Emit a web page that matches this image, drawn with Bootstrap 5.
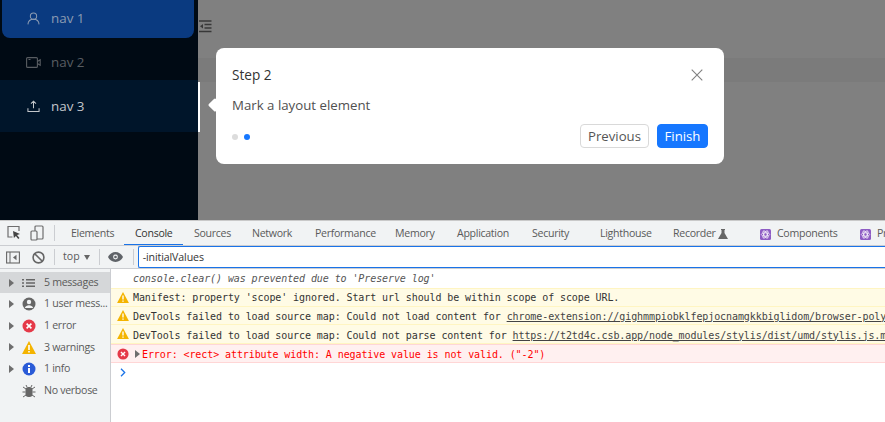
<!DOCTYPE html>
<html lang="en">
<head>
<meta charset="utf-8">
<title>Tour</title>
<link rel="stylesheet" href="https://cdn.jsdelivr.net/npm/bootstrap@5.3.0/dist/css/bootstrap.min.css">
<style>
html,body{margin:0;height:422px;overflow:hidden;background:#fff}
body{font-family:"Open Sans","Noto Sans",sans-serif;font-size:12px;color:#333}
.stage{height:220px;position:relative;background:#808080}
.stage-band{height:24px;background:#7b7b7b}
.stage-main{flex:1 1 auto}
.stage-ico{display:block}
.stage-head{height:58px;padding:20px 0 0 1px}
.side{width:198px;flex:0 0 198px;background:#000a14;height:220px}
.navrow{display:flex;align-items:center;padding-left:27px;gap:11px;font-size:13.4px;color:#6e747a}
.navrow svg{flex:none}
.nav-a{height:38px;margin:0 4px 0 2px;padding-left:25px;padding-bottom:2px;background:#0a3a80;border-radius:0 0 8px 8px;color:#8b9bb2}
.nav-b{height:42px;padding-left:26px;padding-top:6px;gap:10px;color:#585d62}
.nav-c{height:52px;background:#00152a;border-right:2px solid #fff;color:#c3c6ca;margin-right:-2px}
.tourbox{position:absolute;left:216px;top:48px;width:508px;height:116px;background:#fff;border-radius:8px;padding:16px;color:#444}
.tourbox::before{content:"";position:absolute;left:-8px;top:50px;width:14px;height:14px;background:#fff;transform:rotate(45deg) scale(.72);border-radius:2px}
.tour-title{font-size:13.6px;font-weight:500;color:#333;line-height:22px}
.tour-text{font-size:13.25px;line-height:22px;margin-top:8px;color:#505050}
.tour-close{position:absolute;left:475px;top:21px;line-height:0}
.dotset{gap:6px;margin-top:2px}
.dot{width:6px;height:6px;border-radius:50%;background:#dcdcdc}
.dot-on{background:#1677ff}
.tour-foot{margin-top:8px;height:24px}
.tbtn{--bs-btn-font-size:13.2px;font-size:13.2px;line-height:22px;padding:0;border-radius:4px}
.tbtn-a{width:69px;border:1px solid #d9d9d9;background:#fff;color:#555}
.tbtn-b{width:51px;border:1px solid #1677ff;background:#1677ff;color:#fff}
.tabbar{display:grid;grid-template-columns:71px 64px 59px 58px 63px 80px 62px 75px 68px 73px 87px 100px 25px;height:26px;border-top:1px solid #c9c9c9;border-bottom:1px solid #cbcdd1;background:#f1f3f4;font-size:10.6px;letter-spacing:-.3px;color:#5a5a5a;white-space:nowrap;overflow:hidden;align-items:center;position:relative}
.tabbar>span{display:flex;align-items:center;height:100%;padding-top:2px}
.tabbar svg{flex:none}
.tabgl{margin-right:6px}
.tab-on{color:#333;position:relative}
.tab-on::after{content:"";position:absolute;left:-11px;width:59px;bottom:-1px;height:2px;background:#1a73e8}
.tabbar>.tools-ico{position:absolute;top:4px;line-height:0;height:auto;padding-top:0}
.ti-a{left:7px}.ti-b{left:30px}.tabbar>.ti-c{left:54px;height:16px}
.toolbar{height:23px;display:flex;align-items:center;background:#f1f3f4;border-bottom:1px solid #cbcdd1;position:relative;font-size:10.6px;color:#5a5a5a}
.toolbar svg{display:block}
.tbsep{width:1px;height:16px;background:#cbcdd1;flex:none}
.tb-panel{margin-left:6px}.tb-block{margin-left:12px}.tb-s1{margin-left:9px}.tb-top{margin-left:8px}
.tb-caret{margin-left:4px;width:0;height:0;border-top:5px solid #666;border-left:3.5px solid transparent;border-right:3.5px solid transparent}
.tb-s2{margin-left:9px}.tb-eye{margin-left:8px}.tb-s3{margin-left:10px}
.filterbox{flex:1 1 auto;height:22px;margin-left:4px;background:#fff;border:solid #1a73e8;border-width:1px 0 1px 1px;border-radius:2px 0 0 2px;padding-left:4px;line-height:20px;color:#333;font-size:10.6px;letter-spacing:-.1px}
.dtbody{display:flex;height:153px}
.dtside{width:111px;flex:none;background:#f1f3f4;border-right:1px solid #cbcdd1;padding-top:3px;font-size:10.6px;letter-spacing:-.3px;color:#5a5a5a;white-space:nowrap;overflow:hidden}
.dtrow{display:flex;align-items:center;height:21.6px;padding-top:1px}
.dtrow-on{background:#d5d7d9;height:21px}
.dtarrow{width:0;height:0;border-left:5px solid #6e6e6e;border-top:4px solid transparent;border-bottom:4px solid transparent;margin:0 8px 0 9px;flex:none}
.dtarrow-none{width:22px;flex:none}
.dtico{width:14px;flex:none;margin-right:8px;line-height:0;display:block}
.logarea{flex:1 1 auto;min-width:0;font-family:"DejaVu Sans Mono","Liberation Mono",monospace;font-size:10px;letter-spacing:-.09px;white-space:nowrap;overflow:hidden;padding-top:1px;color:#333}
.logrow{display:flex;align-items:center;padding-left:22px;position:relative}
.logrow svg{position:absolute;left:6px;top:3px}
.logq{font-style:italic;color:#555;height:18px;padding-bottom:2px}
.logw{background:#fffbe5;border-bottom:1px solid #fff5c2;height:19px}
.logw+.logw{height:18px;padding-top:1px}
.logw+.logw+.logw{height:19px;padding-top:2px}
.logq+.logw{border-top:1px solid #fff5c2}
.loge{background:#fff0f0;border-top:1px solid #ffd6d6;border-bottom:1px solid #ffd6d6;color:#f00;height:19px;padding-top:1px}
.logw a{color:#444;text-decoration:underline}
.tri{width:0;height:0;border-left:5px solid #6e6e6e;border-top:4px solid transparent;border-bottom:4px solid transparent;margin-right:2px;margin-left:2px}
.prompt{padding-left:9px;padding-top:5px;line-height:0}
</style>
</head>
<body>
<div class="stage d-flex">
  <aside class="side">
    <div class="navrow nav-a"><svg width="13" height="13" viewBox="0 0 14 14" fill="none" stroke="#8b9bb2" stroke-width="1.1"><circle cx="7" cy="4.5" r="3.4"/><path d="M1 13.300c.3-3.300 2.800-5.400 6-5.400s5.700 2.100 6 5.400"/></svg><span>nav 1</span></div>
    <div class="navrow nav-b"><svg width="15" height="11" viewBox="0 0 15 11" fill="none" stroke="#585d62" stroke-width="1.100"><rect x=".6" y=".6" width="10.800" height="9.800" rx="1"/><path d="M2.500 2.500h2M11.400 4.500l2.800-1.700v5.400L11.400 6.500"/></svg><span>nav 2</span></div>
    <div class="navrow nav-c"><svg width="13" height="13" viewBox="0 0 14 14" fill="none" stroke="#c3c6ca" stroke-width="1.100"><path d="M7 9V1.500M4.300 4 7 1.300 9.700 4M1 9v3.500h12V9"/></svg><span>nav 3</span></div>
  </aside>
  <div class="stage-main">
    <div class="stage-head"><svg class="stage-ico" width="13" height="13" viewBox="0 0 13 13" fill="none" stroke="#383838"><path d="M0 1h12.500M0 11.500h12.500" stroke-width="1.700"/><path d="M5.500 4.500h7M5.500 8h7" stroke-width="1.300"/><path d="M1 6.300 4 4v4.600z" fill="#383838" stroke="none"/></svg></div>
    <div class="stage-band"></div>
  </div>
  <div class="tourbox">
    <div class="tour-title">Step 2</div>
    <div class="tour-text">Mark a layout element</div>
    <div class="tour-close"><svg width="12" height="12" viewBox="0 0 12 12" stroke="#808080" stroke-width="1.100" fill="none"><path d="M.7.700l10.600 10.600M11.300.700.700 11.300"/></svg></div>
    <div class="tour-foot d-flex align-items-center justify-content-between">
      <div class="d-flex dotset align-items-center"><span class="dot d-block"></span><span class="dot dot-on d-block"></span></div>
      <div class="d-flex gap-2"><button type="button" class="btn tbtn tbtn-a">Previous</button><button type="button" class="btn tbtn tbtn-b">Finish</button></div>
    </div>
  </div>
</div>
<div class="tabbar">
  <span class="tools-ico ti-a"><svg width="14" height="15" viewBox="0 0 14 15" fill="none"><path d="M12 6V1.500H1V12h4.500" stroke="#6e6e6e" stroke-width="1.200"/><path d="M6 6l7 3-3 1 2.500 3-1.300 1-2.300-3-2 2z" fill="#444"/></svg></span>
  <span class="tools-ico ti-b"><svg width="14" height="16" viewBox="0 0 14 16" fill="none" stroke="#6e6e6e" stroke-width="1.200"><rect x="5" y="1" width="8" height="13" rx="1"/><rect x="1" y="6" width="6" height="9" rx="1" fill="#f1f3f4"/></svg></span>
  <span class="tools-ico tbsep ti-c"></span>
  <span></span><span>Elements</span><span class="tab-on">Console</span><span>Sources</span><span>Network</span><span>Performance</span><span>Memory</span><span>Application</span><span>Security</span><span>Lighthouse</span><span>Recorder&nbsp;<svg width="10" height="10" viewBox="0 0 10 10" fill="#666"><path d="M3 0h4v1H6.500v3L10 10H0l3.500-6V1H3z"/></svg></span><span><svg class="tabgl" width="11" height="11" viewBox="0 0 11 11"><rect width="11" height="11" rx="1.500" fill="#8e5cc4"/><g fill="none" stroke="#fff" stroke-width=".7"><ellipse cx="5.500" cy="5.500" rx="4.200" ry="1.700"/><ellipse cx="5.500" cy="5.500" rx="4.200" ry="1.700" transform="rotate(60 5.500 5.500)"/><ellipse cx="5.500" cy="5.500" rx="4.200" ry="1.700" transform="rotate(120 5.500 5.500)"/></g></svg>Components</span><span><svg class="tabgl" width="11" height="11" viewBox="0 0 11 11"><rect width="11" height="11" rx="1.500" fill="#8e5cc4"/><g fill="none" stroke="#fff" stroke-width=".7"><ellipse cx="5.500" cy="5.500" rx="4.200" ry="1.700"/><ellipse cx="5.500" cy="5.500" rx="4.200" ry="1.700" transform="rotate(60 5.500 5.500)"/><ellipse cx="5.500" cy="5.500" rx="4.200" ry="1.700" transform="rotate(120 5.500 5.500)"/></g></svg>Profiler</span>
</div>
<div class="toolbar">
  <span class="d-block tb-panel"><svg width="14" height="13" viewBox="0 0 14 13" fill="none"><rect x=".6" y="1" width="12.800" height="11" stroke="#666" stroke-width="1.100"/><path d="M4 1v11" stroke="#666"/><path d="M10.500 3.800v5.400L7 6.500z" fill="#666"/></svg></span>
  <span class="d-block tb-block"><svg width="13" height="13" viewBox="0 0 13 13" fill="none" stroke="#666" stroke-width="1.600"><circle cx="6.500" cy="6.500" r="5.400"/><path d="M2.700 2.700l7.600 7.600"/></svg></span>
  <span class="tbsep tb-s1"></span>
  <span class="tb-top">top</span>
  <span class="d-block tb-caret"></span>
  <span class="tbsep tb-s2"></span>
  <span class="d-block tb-eye"><svg width="15" height="10" viewBox="0 0 15 10"><path d="M7.500 0C4 0 1.300 2.300 0 5c1.300 2.700 4 5 7.500 5S13.700 7.700 15 5C13.700 2.300 11 0 7.500 0z" fill="#5f6368"/><circle cx="7.500" cy="5" r="2.400" fill="#f1f3f4"/><circle cx="7.500" cy="5" r="1.300" fill="#5f6368"/></svg></span>
  <span class="tbsep tb-s3"></span>
  <div class="filterbox">-initialValues</div>
</div>
<div class="dtbody">
  <div class="dtside">
    <div class="dtrow dtrow-on"><span class="dtarrow"></span><svg class="dtico" width="14" height="10" viewBox="0 0 14 10" fill="#666"><path d="M0 1h2v1.500H0zM4 1h9v1.500H4zM0 4.300h2v1.500H0zM4 4.300h9v1.500H4zM0 7.500h2V9H0zM4 7.500h9V9H4z"/></svg><span>5 messages</span></div>
    <div class="dtrow"><span class="dtarrow"></span><svg class="dtico" width="14" height="14" viewBox="0 0 14 14"><circle cx="7" cy="7" r="6.500" fill="#666"/><circle cx="7" cy="5" r="2.200" fill="#f1f3f4"/><path d="M2.800 11c.6-2 2.300-2.800 4.200-2.800s3.600.800 4.200 2.800z" fill="#f1f3f4"/></svg><span>1 user mess...</span></div>
    <div class="dtrow"><span class="dtarrow"></span><svg class="dtico" width="14" height="14" viewBox="0 0 14 14"><circle cx="7" cy="7" r="6.500" fill="#e53948"/><path d="M4.600 4.600l4.800 4.800M9.400 4.600 4.600 9.400" stroke="#fff" stroke-width="1.600"/></svg><span>1 error</span></div>
    <div class="dtrow"><span class="dtarrow"></span><svg class="dtico" width="14" height="13" viewBox="0 0 14 13"><path d="M7 0 14 13H0z" fill="#f4b400"/><path d="M6.200 4h1.600v5H6.200zM6.200 10h1.600v1.500H6.200z" fill="#fff"/></svg><span>3 warnings</span></div>
    <div class="dtrow"><span class="dtarrow"></span><svg class="dtico" width="14" height="14" viewBox="0 0 14 14"><circle cx="7" cy="7" r="6.500" fill="#2a5bd7"/><path d="M6 6h2v5H6zM6 3h2v2H6z" fill="#fff"/></svg><span>1 info</span></div>
    <div class="dtrow"><span class="dtarrow-none"></span><svg class="dtico" width="14" height="14" viewBox="0 0 14 14" fill="#666"><rect x="3.500" y="3" width="7" height="10" rx="3"/><path d="M1 3l3 2M13 3l-3 2M.5 8h3M13.500 8h-3M1 13l3-2M13 13l-3-2M5 3l-1-2M9 3l1-2" stroke="#666" fill="none"/></svg><span>No verbose</span></div>
  </div>
  <div class="logarea">
    <div class="logrow logq">console.clear() was prevented due to 'Preserve log'</div>
    <div class="logrow logw"><svg width="12" height="11" viewBox="0 0 14 13"><path d="M7 0 14 13H0z" fill="#f4b400"/><path d="M6.200 4h1.600v5H6.200zM6.200 10h1.600v1.500H6.200z" fill="#fff"/></svg>Manifest: property 'scope' ignored. Start url should be within scope of scope URL.</div>
    <div class="logrow logw"><svg width="12" height="11" viewBox="0 0 14 13"><path d="M7 0 14 13H0z" fill="#f4b400"/><path d="M6.200 4h1.600v5H6.200zM6.200 10h1.600v1.500H6.200z" fill="#fff"/></svg>DevTools failed to load source map: Could not load content for&nbsp;<a href="#">chrome-extension://gighmmpiobklfepjocnamgkkbiglidom/browser-polyfill.js.map</a></div>
    <div class="logrow logw"><svg width="12" height="11" viewBox="0 0 14 13"><path d="M7 0 14 13H0z" fill="#f4b400"/><path d="M6.200 4h1.600v5H6.200zM6.200 10h1.600v1.500H6.200z" fill="#fff"/></svg>DevTools failed to load source map: Could not parse content for&nbsp;<a href="#">https://t2td4c.csb.app/node_modules/stylis/dist/umd/stylis.js.map</a></div>
    <div class="logrow loge"><svg width="12" height="12" viewBox="0 0 14 14"><circle cx="7" cy="7" r="6.500" fill="#e53948"/><path d="M4.600 4.600l4.800 4.800M9.400 4.600 4.600 9.400" stroke="#fff" stroke-width="1.600"/></svg><span class="tri"></span>Error: &lt;rect&gt; attribute width: A negative value is not valid. ("-2")</div>
    <div class="prompt"><svg width="6" height="9" viewBox="0 0 6 9" fill="none" stroke="#1a73e8" stroke-width="1.300"><path d="M1 .800 4.700 4.500 1 8.200"/></svg></div>
  </div>
</div>
</body>
</html>
